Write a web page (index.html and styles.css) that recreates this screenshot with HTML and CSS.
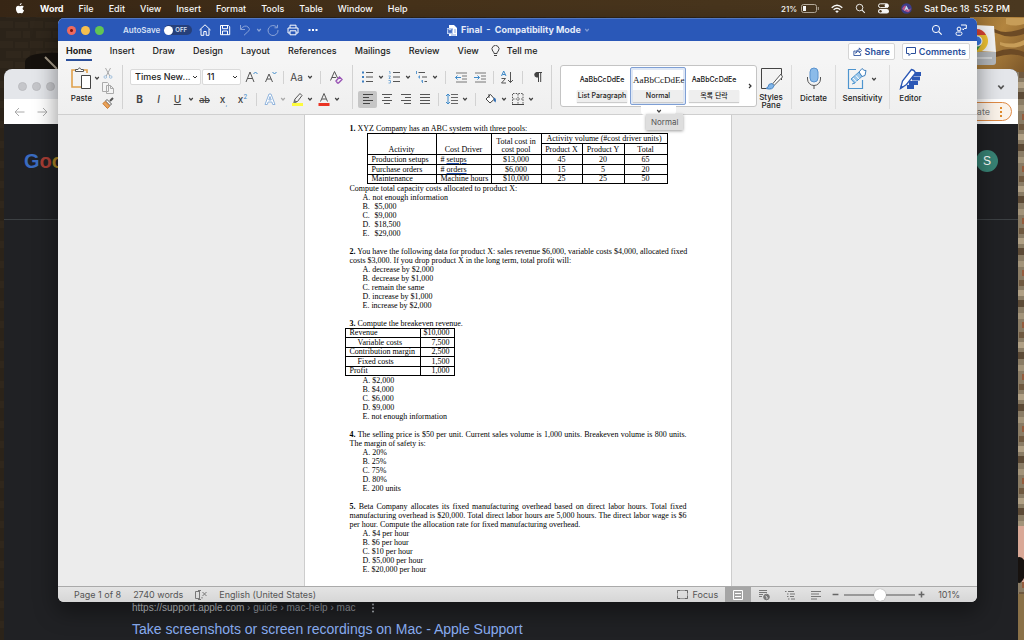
FILE: index.html
```html
<!DOCTYPE html>
<html lang="en">
<head>
<meta charset="utf-8">
<title>Final - Compatibility Mode</title>
<link rel="stylesheet" href="styles.css">
</head>
<body>
<svg class="defs" aria-hidden="true">
  <symbol id="chev" viewBox="0 0 8 8"><path d="M2.2 3 4 5l1.8-2" fill="none" stroke="currentColor" stroke-width="1.2"/></symbol>
  <symbol id="mag" viewBox="0 0 12 12"><circle cx="5" cy="5" r="3.6" fill="none" stroke="currentColor"/><path d="m7.7 7.7 3 3" stroke="currentColor" stroke-width="1.2"/></symbol>
</svg>
<div class="desktop">
  <svg class="wallpaper" viewBox="0 0 1024 640" preserveAspectRatio="none" aria-hidden="true">
    <defs>
      <pattern id="dark" width="30" height="20" patternUnits="userSpaceOnUse"><rect width="30" height="20" fill="#2b2319"/><path d="M0 1h13v7H0zM15 2h13v6H15zM6 11h15v7H6zM23 11h7v7h-7z" fill="#30271c"/></pattern>
      <pattern id="brick" width="26" height="52" patternUnits="userSpaceOnUse"><rect width="26" height="52" fill="#8a7c65"/><path d="M0 1h17v6H0z" fill="#a3947a"/><path d="M18 2h8v6h-8zM5 20h15v6H5z" fill="#6f5940"/><path d="M8 10h18v6H8z" fill="#955c3d"/><path d="M0 30h14v6H0zM15 29h11v7H15z" fill="#b0a085"/><path d="M3 40h19v7H3z" fill="#5c4a36"/></pattern>
      <linearGradient id="gold" x2="1" y2="1"><stop stop-color="#8d672f"/><stop offset=".5" stop-color="#b3853f"/><stop offset="1" stop-color="#7c572a"/></linearGradient>
    </defs>
    <rect width="1024" height="640" fill="url(#dark)"/>
    <path d="M25 62c0-6 12-10 33-9v20H25z" fill="#15110d"/><path d="m45 57 12 12" stroke="#a79c8a" stroke-width="2"/>
    <rect x="970" width="54" height="640" fill="url(#brick)"/>
    <rect x="970" width="54" height="72" fill="url(#gold)"/>
    <path d="M977 30q12-5 20 0t27-2v6q-14 5-25 0t-22 4zM996 52q14-6 28 0v5q-12-5-28 0z" fill="#6c4a25"/>
    <path d="M1006 18h18v6q-9 3-18 0zM1000 42q12 4 24-2v5q-12 5-24 0z" fill="#c79d58"/>
    <rect x="1014" y="526" width="10" height="56" fill="#d9a896"/><path d="M1014 560q6-6 10 0v18q-5 10-10 0z" fill="#17120f"/><rect x="1014" y="594" width="10" height="46" fill="#8a7148"/>
    <g>
      <path d="m974 25 20 1 2 26-19-1z" fill="#f4f5f6"/><path d="M974 52h22v10q0 3-3 3h-19z" fill="#b5b9bd"/><path d="M974 58h18" stroke="#f2f2f2"/>
      <circle cx="977" cy="41" r="11" fill="#f2c532"/><path d="M966 36a11 11 0 0 1 20-1h-9z" fill="#d94434"/><path d="m968 46 8 6 5-7z" fill="#3c9a4e"/><circle cx="977" cy="41" r="5.5" fill="#fff"/><circle cx="977" cy="41" r="4.4" fill="#3b7ded"/>
    </g>
  </svg>

  <header class="menubar">
    <nav class="menus" aria-label="Menu bar">
      <svg class="apple" viewBox="0 0 12 14"><path d="M8.1 0C8.200 1.500 7 2.900 5.700 2.900 5.500 1.500 6.800.200 8.100 0zM10.700 10.200C10 11.900 9.200 13.200 8.100 13.200 7.300 13.200 7.100 12.700 6.100 12.700 5.100 12.700 4.800 13.200 4.100 13.200 2.700 13.200.800 10 .800 7.300.800 4.900 2.200 3.500 3.800 3.500c.900 0 1.600.600 2.200.600.600 0 1.500-.700 2.600-.600 1 .100 1.700.500 2.200 1.200C8.600 6 8.900 9 11.200 9.300z" fill="currentColor"/></svg>
      <button class="menu app">Word</button><button class="menu">File</button><button class="menu">Edit</button><button class="menu">View</button><button class="menu">Insert</button><button class="menu">Format</button><button class="menu">Tools</button><button class="menu">Table</button><button class="menu">Window</button><button class="menu">Help</button>
    </nav>
    <div class="tray">
      <span class="battery">21%<svg width="18" height="9" viewBox="0 0 18 9"><rect x=".5" y=".5" width="15" height="8" rx="2" fill="none" stroke="#b9ae9d"/><rect x="2" y="2" width="3" height="5" fill="#fff"/><path d="M17.300 3v3" stroke="#b9ae9d"/></svg></span>
      <svg width="12" height="10" viewBox="0 0 12 10" fill="none" stroke="#fff" stroke-width="1.400"><path d="M.700 3.700Q6-1.200 11.300 3.700M2.600 5.700Q6 2.800 9.400 5.700"/><path d="M4.200 7.200Q6 5.800 7.800 7.200L6 9z" fill="#fff" stroke="none"/></svg>
      <svg width="11" height="11"><use href="#mag"/></svg>
      <svg width="11" height="11" viewBox="0 0 11 11"><rect x=".5" y=".8" width="10" height="3.800" rx="1.900" fill="none" stroke="#fff"/><circle cx="8.500" cy="2.700" r="1.900" fill="#fff"/><rect y="6" width="11" height="4.600" rx="2.300" fill="#fff"/><circle cx="2.500" cy="8.300" r="1.200" fill="#4a3720"/></svg>
      <svg width="11" height="11" viewBox="0 0 11 11"><circle cx="5.500" cy="5.500" r="5.300" fill="#3d3f8c"/><path d="M1 6q3-6 5-2t4 1q-1 5-4 4T1 6z" fill="#b9568f"/><path d="m3 8 2.500-5.500L8 8 5.500 6z" fill="#bfe9f5"/></svg>
      <time class="clock">Sat Dec 18&nbsp; 5:52 PM</time>
    </div>
  </header>

  <section class="browser" aria-label="Browser">
    <div class="tabstrip"><span class="dots"><i></i><i></i><i></i></span><svg width="12" height="12"><use href="#chev"/></svg></div>
    <div class="toolbar">
      <span class="nav"><svg width="11" height="10" viewBox="0 0 11 10"><path d="M10.500 5H1m4-4L1 5l4 4" fill="none" stroke="currentColor"/></svg><svg width="11" height="10" viewBox="0 0 11 10"><path d="M.500 5H10M6 1l4 4-4 4" fill="none" stroke="currentColor"/></svg></span>
      <button class="update">Update <svg width="4" height="12" viewBox="0 0 4 12" fill="#df8a2b"><path d="M1 1h2v2H1zM1 5h2v2H1zM1 9h2v2H1z"/></svg></button>
    </div>
    <div class="results">
      <div class="ghead"><span class="logo"><b class="g1">G</b><b class="g2">o</b><b class="g3">o</b></span><span class="avatar">S</span></div>
      <div class="hit">
        <div class="cite"><span><em>https://support.apple.com</em> › guide › mac-help › mac</span><svg width="4" height="10" viewBox="0 0 4 10" fill="#b5bac0"><circle cx="2" cy="1.500" r="1"/><circle cx="2" cy="5" r="1"/><circle cx="2" cy="8.500" r="1"/></svg></div>
        <a href="#result">Take screenshots or screen recordings on Mac - Apple Support</a>
      </div>
    </div>
  </section>

  <main class="word">
    <div class="titlebar">
      <div class="tools">
        <span class="lights"><i class="red"></i><i class="amber"></i><i class="green"></i></span>
        <label class="autosave">AutoSave<span class="switch"><input type="checkbox"><span class="knob"></span>OFF</span></label>
        <button class="tb" aria-label="Home"><svg viewBox="0 0 12 12"><path d="M.500 6 6 .800 11.500 6M2 5v6.300h2.800V7.500h2.400v3.800H10V5" fill="none" stroke="currentColor"/></svg></button>
        <button class="tb" aria-label="Save"><svg viewBox="0 0 12 12"><path d="M1.500 1.500h8l1.200 1.200v8H1.500zM3.500 1.500v3.200h5V1.500M3.500 10.700V7h5v3.700" fill="none" stroke="currentColor"/></svg></button>
        <button class="tb dim" aria-label="Undo"><svg viewBox="0 0 12 12"><path d="M1.500 1v4.500H6M1.800 5Q6 .300 9 3t-.500 5L5 11.300" fill="none" stroke="currentColor"/></svg></button>
        <svg class="tchev"><use href="#chev"/></svg>
        <button class="tb dim" aria-label="Redo"><svg viewBox="0 0 12 12"><path d="M10 3.500A5 5 0 1 0 11 6M10.500.800v3H7.500" fill="none" stroke="currentColor"/></svg></button>
        <button class="tb" aria-label="Print"><svg viewBox="0 0 12 12"><path d="M3 4V1.200h6V4M3 9H1V4h10v5H9M3 6.800h6v4H3z" fill="none" stroke="currentColor"/></svg></button>
        <button class="tb" aria-label="More"><svg viewBox="0 0 12 12"><path d="M1.500 5h2v2h-2zM5 5h2v2H5zM8.500 5h2v2h-2z" fill="currentColor"/></svg></button>
      </div>
      <h1 class="doctitle"><svg width="10" height="11" viewBox="0 0 10 11"><path d="M2 0h5l3 3v8H2z" fill="#fff"/><rect y="3" width="6" height="6" fill="#b9cdf0"/><path d="m1 4 1 4 1-3 1 3 1-4" fill="none" stroke="#2b57b5" stroke-width=".8"/><path d="M7 5h2M7 7h2M4 10h5" stroke="#8ba8de"/></svg>Final&nbsp; -&nbsp; Compatibility Mode<svg class="tchev"><use href="#chev"/></svg></h1>
      <div class="right"><button class="tb" aria-label="Search"><svg><use href="#mag"/></svg></button><button class="tb" aria-label="Collaborate"><svg viewBox="0 0 12 12" fill="none" stroke="currentColor"><circle cx="4" cy="5" r="1.900"/><path d="M1 9.500q0-1.500 1.500-1.500h3Q7 8 7 9.500T5.500 11.300h-3Q1 11.300 1 9.500zM6 1h5.300v3.500H9.500L8 6V4.500"/></svg></button></div>
    </div>

    <div class="tabrow">
      <nav class="tabs" aria-label="Ribbon tabs">
        <button class="tab on">Home</button><button class="tab">Insert</button><button class="tab">Draw</button><button class="tab">Design</button><button class="tab">Layout</button><button class="tab">References</button><button class="tab">Mailings</button><button class="tab">Review</button><button class="tab">View</button>
        <button class="tab tell"><svg width="9" height="12" viewBox="0 0 9 12" fill="none" stroke="#444"><path d="M3 8.500Q3 7 1.700 6A3.500 3.500 0 1 1 7.300 6Q6 7 6 8.500zM3 10.500h3"/></svg>Tell me</button>
      </nav>
      <div class="actions">
        <button class="pill"><svg width="9" height="9" viewBox="0 0 10 10" fill="none" stroke="currentColor"><path d="M3 4.500H1v5h7.500V7M3 7q0-4 4-4V1l2.500 3L7 6.500v-2Q4.500 4.500 3 7z"/></svg>Share</button>
        <button class="pill"><svg width="10" height="9" viewBox="0 0 10 9" fill="none" stroke="currentColor"><path d="M.500.500h9v6H5l-2 2v-2H.500z"/></svg>Comments</button>
      </div>
    </div>

    <div class="ribbon">
      <div class="group clip">
        <button class="big paste"><svg width="22" height="23" viewBox="0 0 22 23"><path d="M5 3H1v17h9M13 3h3v3" fill="none" stroke="#e0a04a" stroke-width="1.600"/><path d="M4.500 4.500V2.500H7L8.500.700 10 2.500h2.500v2z" fill="#fff" stroke="#555"/><path d="M10.500 8.500h9v13h-9z" fill="#fff" stroke="#444"/></svg><span>Paste</span></button>
        <svg class="chev clipchev"><use href="#chev"/></svg>
        <div class="stack">
          <button aria-label="Cut"><svg viewBox="0 0 12 12" fill="none" stroke="#aaa"><path d="m3.500 1 4.300 8M8.500 1 4.200 9"/><circle cx="3.300" cy="10" r="1.300" stroke="#a3c1dd"/><circle cx="8.700" cy="10" r="1.300" stroke="#a3c1dd"/></svg></button>
          <button aria-label="Copy"><svg viewBox="0 0 12 12" fill="#f4f4f4" stroke="#aaa"><path d="M.500.500h5l1 1v8h-6zM4.500 3.500h4l3 3v5h-7zM8.500 3.500v3h3"/></svg></button>
          <button aria-label="Format painter"><svg viewBox="0 0 12 12"><path d="m8 4 3-3" stroke="#555" stroke-width="2"/><path d="m5 2.500 4.500 4.500-1.500 1.500L3.500 4z" fill="#fff" stroke="#555"/><path d="M3.300 4.500.800 6.500 5.500 11.500l2.200-2.500z" fill="#e9a35b" stroke="#c97b33"/></svg></button>
        </div>
      </div>

      <div class="group rows">
        <div class="row">
          <select class="fname" aria-label="Font"><option>Times New...</option></select><select class="fsize" aria-label="Font size"><option>11</option></select>
          <button class="ib" aria-label="Grow font"><svg viewBox="0 0 14 14" fill="none"><path d="m2 12 4-10 4 10M3.500 8.500h5" stroke="#555"/><path d="M9.500 4 11.500 2l2 2" stroke="#3f8ac9"/></svg></button>
          <button class="ib" aria-label="Shrink font"><svg viewBox="0 0 14 14" fill="none"><path d="m2.500 12 3.500-8 3.500 8M4 9h4" stroke="#555"/><path d="m9.500 2 2 2 2-2" stroke="#3f8ac9"/></svg></button>
          <i class="sep"></i><button class="ib txt light">Aa</button><svg class="chev"><use href="#chev"/></svg><i class="sep wide"></i>
          <button class="ib" aria-label="Clear formatting"><svg viewBox="0 0 14 14" fill="none"><path d="m1.500 10.500 4-9 3 6.500M3 7.500h4" stroke="#555"/><path d="m7 11 3.500-4 2.500 2.500-3.500 3.500h-1z" stroke="#9a55b5" stroke-width="1.400"/></svg></button>
        </div>
        <div class="row">
          <button class="ib txt bold">B</button><button class="ib txt ital">I</button><button class="ib txt under">U</button><svg class="chev"><use href="#chev"/></svg>
          <button class="ib txt strike">ab</button><button class="ib txt">x<sub>,</sub></button><button class="ib txt">x<sup>2</sup></button><i class="sep"></i>
          <button class="ib" aria-label="Text effects"><svg viewBox="0 0 14 14"><path d="M2 12.500 6 2h2l4 10.500H9.700L8.900 10H5.100l-.800 2.500zM5.800 8h2.400L7 4.500z" fill="#fff" stroke="#8fb3dc"/></svg></button><svg class="chev pale"><use href="#chev"/></svg>
          <button class="ib" aria-label="Highlight"><svg viewBox="0 0 14 14"><path d="M2 11h11v3H2z" fill="#fdfb3d"/><path d="m5 7 5-5.500 2 2L7.500 9.500H4z" fill="#f1f1f1" stroke="#555"/><path d="m3 11 2-3 2 2-1 1z" fill="#777"/></svg></button><svg class="chev"><use href="#chev"/></svg>
          <button class="ib" aria-label="Font colour"><svg viewBox="0 0 14 14"><path d="M1.500 11h11v3h-11z" fill="#ea3323"/><path d="m3.500 9.500 3.500-8 3.500 8M5 7h4" fill="none" stroke="#555"/></svg></button><svg class="chev"><use href="#chev"/></svg>
        </div>
      </div>

      <div class="group rows">
        <div class="row">
          <button class="ib" aria-label="Bullets"><svg viewBox="0 0 14 14"><path d="M1 1.500h2v2H1zM1 6h2v2H1zM1 10.500h2v2H1z" fill="#3f7fc0"/><path d="M5 2.500h7M5 7h7M5 11.500h7" stroke="#555"/></svg></button><svg class="chev"><use href="#chev"/></svg>
          <button class="ib" aria-label="Numbering"><svg viewBox="0 0 14 14"><path d="M1 1.500h1v2.500M.500 6h2L1 8.500h1.500M.500 10.500h2v2.500H.500" fill="none" stroke="#79abd6"/><path d="M5 2.500h7M5 7h7M5 11.500h7" stroke="#555"/></svg></button><svg class="chev"><use href="#chev"/></svg>
          <button class="ib" aria-label="Multilevel list"><svg viewBox="0 0 14 14"><path d="M1.500 1v3M4.500 5.500v3M7.500 10v3M3 7h2M6 11h2" fill="none" stroke="#5c9ad0"/><path d="M3.500 2.500H10M7 7h5M9.500 11.500H12" stroke="#555"/></svg></button><svg class="chev"><use href="#chev"/></svg><i class="sep wide"></i>
          <button class="ib" aria-label="Decrease indent"><svg viewBox="0 0 14 14" fill="none"><path d="M2 3h11M8 6h5M8 9h5M2 12h11" stroke="#777"/><path d="M7 7.500H1.500m2-2-2 2 2 2" stroke="#3f8ac9"/></svg></button>
          <button class="ib" aria-label="Increase indent"><svg viewBox="0 0 14 14" fill="none"><path d="M2 3h11M8 6h5M8 9h5M2 12h11" stroke="#777"/><path d="M1 7.500h5.500m-2-2 2 2-2 2" stroke="#3f8ac9"/></svg></button><i class="sep"></i>
          <button class="ib" aria-label="Sort"><svg viewBox="0 0 14 14" fill="none"><path d="m1.500 6 2.200-5L6 6M2.500 4.500h2.700" stroke="#3f8ac9"/><path d="M1.500 8.500h4l-4 4.500H6M10.500 2v10.500M8 10l2.500 2.500L13 10" stroke="#555"/></svg></button><i class="sep wide"></i>
          <button class="ib" aria-label="Show marks"><svg viewBox="0 0 14 14"><path d="M7 2H5.500a2.800 2.800 0 0 0 0 5.500H7z" fill="#444"/><path d="M7.500 2v10M9.700 2v10M5.500 2.500H11" stroke="#444" fill="none"/></svg></button>
        </div>
        <div class="row">
          <button class="ib sel" aria-label="Align left"><svg viewBox="0 0 14 14"><path d="M2 2.500h10M2 5.500h6M2 8.500h10M2 11.500h7" stroke="#444"/></svg></button>
          <button class="ib" aria-label="Centre"><svg viewBox="0 0 14 14"><path d="M2 2.500h10M4 5.500h6M2 8.500h10M4 11.500h6" stroke="#555"/></svg></button>
          <button class="ib" aria-label="Align right"><svg viewBox="0 0 14 14"><path d="M2 2.500h10M6 5.500h6M2 8.500h10M5 11.500h7" stroke="#555"/></svg></button>
          <button class="ib" aria-label="Justify"><svg viewBox="0 0 14 14"><path d="M2 2.500h10M2 5.500h10M2 8.500h10M2 11.500h10" stroke="#555"/></svg></button><i class="sep"></i>
          <button class="ib" aria-label="Line spacing"><svg viewBox="0 0 14 14" fill="none"><path d="M6 2.500h7M6 5.500h7M6 8.500h7M6 11.500h7" stroke="#666"/><path d="M3 2v10M1 4l2-2 2 2M1 10l2 2 2-2" stroke="#3f8ac9"/></svg></button><svg class="chev"><use href="#chev"/></svg><i class="sep wide"></i>
          <button class="ib" aria-label="Shading"><svg viewBox="0 0 14 14"><path d="m6.500 2.500 4 4.500-4.500 4-4-4z" fill="#fff" stroke="#444"/><path d="M5 2v4" stroke="#444"/><path d="M9.500 5.500q3.500.500 2 5-2-1-2-5z" fill="#2d6cb5"/></svg></button><svg class="chev"><use href="#chev"/></svg>
          <button class="ib" aria-label="Borders"><svg viewBox="0 0 14 14" fill="none"><path d="M2 1.500h10.500M1.500 2v10M12 2v10M7 2v10M2 7h10" stroke="#555" stroke-dasharray="1.500 1.200"/><path d="M1 12.500h12" stroke="#444"/></svg></button><svg class="chev"><use href="#chev"/></svg>
        </div>
      </div>

      <div class="gallery">
        <button class="style"><span class="sample">AaBbCcDdEe</span><span class="sname">List Paragraph</span></button>
        <button class="style picked"><span class="sample serif">AaBbCcDdEe</span><span class="sname">Normal</span></button>
        <button class="style"><span class="sample">AaBbCcDdEe</span><span class="sname">목록 단락</span></button>
        <button class="next" aria-label="More styles"><svg width="6" height="8" viewBox="0 0 6 8"><path d="m2 2 2 2-2 2" fill="none" stroke="#333" stroke-width="1.200"/></svg></button>
        <button class="expand" aria-label="Expand gallery"><svg class="chev"><use href="#chev"/></svg></button>
        <span class="tip" role="tooltip">Normal</span>
      </div>

      <button class="big pane"><svg width="23" height="23" viewBox="0 0 23 23"><path d="M11 21.500H1.500v-20h20V13" fill="none" stroke="#444"/><path d="M21 7 12.500 17l1.500 1.500L22.500 10z" fill="#fff" stroke="#555"/><path d="M12 16.500q-4 0-4 3.500l-2 1.500q7 2 8-3z" fill="#82b6e8" stroke="#4a86c5"/></svg><span>Styles<br>Pane</span></button>
      <button class="big dictate"><svg width="16" height="23" viewBox="0 0 16 23"><rect x="4" y="1" width="8" height="14" rx="4" fill="#8bbbe9" stroke="#5a93cf"/><path d="M1.500 10v2a6.500 6.500 0 0 0 13 0v-2M8 18.500V22" fill="none" stroke="#555"/></svg><span>Dictate</span></button>
      <button class="big sens"><span class="icons"><svg width="20" height="23" viewBox="0 0 20 23"><path d="M9 2.500H1.500v19h14V13" fill="none" stroke="#4e95cf" stroke-width="1.200"/><path d="m4 12 8-7 3.500 4-8 7zM5 17l3-1" fill="#9cc7ea" stroke="#4e95cf"/><path d="m6 11 3.500 4M9 8.500l3.500 4" stroke="#fff"/><path d="m12 5 3-3.500q2 2.500 4 2l-1 5-3 1z" fill="#fff" stroke="#3e7fbd"/></svg><svg class="chev"><use href="#chev"/></svg></span><span>Sensitivity</span></button>
      <button class="big editor"><svg width="23" height="23" viewBox="0 0 23 23"><path d="M14 7h8M13 11.500h8M10 16h9M8 20h7" stroke="#2b57b5" stroke-width="4"/><path d="M12.500 2.500 3.500 14 1.500 21.500 7.500 17.500 16.500 6q-1-3-4-3.500z" fill="#fff" stroke="#2b57b5" stroke-width="1.300"/><path d="m2 18 2.500 2-3.500 2z" fill="#2b57b5"/></svg><span>Editor</span></button>
    </div>

    <div class="canvas">
      <article class="page">
        <p><b>1.</b> XYZ Company has an ABC system with three pools:</p>
        <table class="costs">
          <colgroup><col class="c1"><col class="c2"><col class="c3"><col class="c4"><col class="c5"><col class="c6"></colgroup>
          <tr><th rowspan="2">Activity</th><th rowspan="2">Cost Driver</th><th rowspan="2">Total cost in<br>cost pool</th><th colspan="3">Activity volume (#cost driver units)</th></tr>
          <tr class="tall"><th>Product X</th><th>Product Y</th><th>Total</th></tr>
          <tr><td>Production setups</td><td># <u>setups</u></td><td>$13,000</td><td>45</td><td>20</td><td>65</td></tr>
          <tr><td>Purchase orders</td><td># <u>orders</u></td><td>$6,000</td><td>15</td><td>5</td><td>20</td></tr>
          <tr class="short"><td>Maintenance</td><td>Machine hours</td><td>$10,000</td><td>25</td><td>25</td><td>50</td></tr>
        </table>
        <p>Compute total capacity costs allocated to product X:</p>
        <ul class="lettered"><li><span>A.</span>not enough information</li><li><span>B.</span>$5,000</li><li><span>C.</span>$9,000</li><li><span>D.</span>$18,500</li><li><span>E.</span>$29,000</li></ul>
        <p><span class="line"><b>2.</b> You have the following data for product X: sales revenue $6,000, variable costs $4,000, allocated fixed</span> <span class="line">costs $3,000. If you drop product X in the long term, total profit will:</span></p>
        <ul><li>A. decrease by $2,000</li><li>B. decrease by $1,000</li><li>C. remain the same</li><li>D. increase by $1,000</li><li>E. increase by $2,000</li></ul>
        <p><b>3.</b> Compute the breakeven revenue.</p>
        <table class="income">
          <tr class="short"><td>Revenue</td><td>$10,000</td></tr><tr><td class="in">Variable costs</td><td>7,500</td></tr><tr class="short"><td>Contribution margin</td><td>2,500</td></tr><tr><td class="in">Fixed costs</td><td>1,500</td></tr><tr class="short"><td>Profit</td><td>1,000</td></tr>
        </table>
        <ul><li>A. $2,000</li><li>B. $4,000</li><li>C. $6,000</li><li>D. $9,000</li><li>E. not enough information</li></ul>
        <p><b>4.</b> The selling price is $50 per unit. Current sales volume is 1,000 units. Breakeven volume is 800 units. The margin of safety is:</p>
        <ul><li>A. 20%</li><li>B. 25%</li><li>C. 75%</li><li>D. 80%</li><li>E. 200 units</li></ul>
        <p><b>5.</b> Beta Company allocates its fixed manufacturing overhead based on direct labor hours. Total fixed manufacturing overhead is $20,000. Total direct labor hours are 5,000 hours. The direct labor wage is $6 per hour. Compute the allocation rate for fixed manufacturing overhead.</p>
        <ul><li>A. $4 per hour</li><li>B. $6 per hour</li><li>C. $10 per hour</li><li>D. $5,000 per hour</li><li>E. $20,000 per hour</li></ul>
      </article>
    </div>

    <footer class="status">
      <div class="info"><span>Page 1 of 8</span><span>2740 words</span><svg width="12" height="10" viewBox="0 0 12 10" fill="none" stroke="#777"><path d="M4.500 1.500H.500v7h4M4.500 1v8.500M3 9.500h3M3 .500h3M7.500 2l4 4M11.500 2l-4 4M7 8.500V7"/></svg><span>English (United States)</span></div>
      <div class="views">
        <button class="focus"><svg width="11" height="9" viewBox="0 0 11 9" fill="none" stroke="#666"><path d="M.500.500h10v8H.500z" stroke="#999"/><path d="M.500 3V.500H3M8 .500h2.500V3M.500 6v2.500H3M8 8.500h2.500V6"/></svg>Focus</button>
        <button class="view now" aria-label="Print layout"><svg viewBox="0 0 12 12" fill="none" stroke="#fff"><path d="M1.500 1.500h9v9h-9zM3 4.500h6M3 7.500h6"/></svg></button>
        <button class="view" aria-label="Web layout"><svg viewBox="0 0 12 12" fill="none" stroke="#777"><path d="M1 1.500h8M1 3.500h8M1 5.500h4M1 7.500h3"/><circle cx="8.500" cy="8" r="2.800" fill="#777"/><path d="m7.500 7 1.500 1v2" stroke="#ddd"/></svg></button>
        <button class="view" aria-label="Outline"><svg viewBox="0 0 12 12" fill="none" stroke="#777"><path d="M1 2.500h1.500M4 2.500h6M3 5h1.500M6 5h5M3 7.500h1.500M6 7.500h4M4 10h1.500M7 10h4"/></svg></button>
        <button class="view" aria-label="Draft"><svg viewBox="0 0 12 12" fill="none" stroke="#777"><path d="M1 2.500h10M1 5h8M1 7.500h10M1 10h6"/></svg></button>
        <button class="zoom" aria-label="Zoom out"><svg viewBox="0 0 6 6"><path d="M.500 3h5" stroke="#666" stroke-width="1.300"/></svg></button><input type="range" min="0" max="100" value="50" aria-label="Zoom"><button class="zoom" aria-label="Zoom in"><svg viewBox="0 0 6 6"><path d="M.500 3h5M3 .500v5" stroke="#666" stroke-width="1.300"/></svg></button>
        <span class="pct">101%</span>
      </div>
    </footer>
  </main>
</div>
</body>
</html>
```

FILE: styles.css
```css
* { box-sizing: border-box; }
body { margin: 0; font: 9px/12px Inter, "Noto Sans CJK KR", sans-serif; color: #222; }
button { border: 0; padding: 0; background: none; font: inherit; color: inherit; white-space: nowrap; }
p, ul, h1 { margin: 0; padding: 0; }
svg { flex: none; display: block; }
.defs { position: absolute; width: 0; height: 0; }
.desktop { position: relative; height: 100vh; overflow: hidden; background: #2b2319; }
.wallpaper { position: absolute; inset: 0; width: 100%; height: 100%; }

.menubar { position: relative; display: flex; justify-content: space-between; align-items: center; height: 17px; padding: 0 14px 0 15px; background: linear-gradient(90deg, #372615, #46321a 40%, #4a3820); color: #fff; font-weight: 500; }
.menus { display: flex; align-items: center; gap: 15px; }
.apple { width: 10px; height: 11px; }
.app { font-weight: 700; }
.tray { display: flex; align-items: center; gap: 12px; }
.battery { display: flex; align-items: center; gap: 4px; font-size: 8px; }

.browser { position: absolute; inset: 69px 6px 0 4px; display: flex; flex-direction: column; border-radius: 8px 8px 0 0; overflow: hidden; background: #202124; }
.tabstrip { flex: none; height: 30px; padding: 5px 11px 0 14px; display: flex; align-items: center; justify-content: space-between; background: #e4e6ea; color: #555; }
.dots { display: flex; gap: 5px; }
.dots i { width: 9px; height: 9px; border-radius: 50%; background: #c5c6ca; border: 1px solid #bcbdc1; }
.toolbar { flex: none; height: 25px; padding: 0 6px 0 10px; display: flex; align-items: center; justify-content: space-between; background: #fff; }
.nav { display: flex; gap: 12px; color: #aaa; }
.update { display: flex; align-items: center; gap: 9px; height: 19px; padding: 0 8px; border: 1px solid #df8a45; border-radius: 10px; background: #fbf3ea; color: #777; }
.results { flex: 1; display: flex; flex-direction: column; justify-content: space-between; font-family: "Liberation Sans", sans-serif; }
.ghead { display: flex; align-items: center; justify-content: space-between; height: 96px; padding: 0 20px 22px 20px; border-bottom: 1px solid #3c4043; }
.logo { font-size: 20px; line-height: 24px; }
.g1 { color: #3a6bc0; } .g2 { color: #a63d34; } .g3 { color: #a98222; }
.avatar { width: 22px; height: 22px; border-radius: 50%; background: #388375; color: #fff; font-size: 12px; line-height: 22px; text-align: center; }
.hit { padding: 0 128px 2px; color: #9a9ea4; }
.cite { display: flex; align-items: center; gap: 16px; font-size: 10px; line-height: 14px; }
.cite em { font-style: normal; color: #c4c7cb; }
.hit a { display: block; margin-top: 5px; color: #8aaef2; font-size: 14px; line-height: 18px; text-decoration: none; }

.word { position: absolute; inset: 18px 47px 38px 58px; display: flex; flex-direction: column; border-radius: 6px; overflow: hidden; background: #ececec; box-shadow: 0 8px 22px 2px rgba(0, 0, 0, .4); }
.titlebar { flex: none; display: grid; grid-template-columns: 1fr auto 1fr; align-items: center; height: 23px; padding: 0 6px 0 9px; background: #2a58b8; border-top: 1px solid #5378c4; color: #fff; }
.tools, .lights, .autosave, .right, .doctitle { display: flex; align-items: center; }
.lights { gap: 5px; }
.lights i { width: 9px; height: 9px; border-radius: 50%; }
.red { background: radial-gradient(circle, #7c1512 1px, #ee6a5e 2px); } .amber { background: #f5be4f; } .green { background: #61c554; }
.autosave { gap: 4px; margin: 0 3px 0 19px; font-size: 8px; font-weight: 600; color: #d6e0f4; }
.switch { display: flex; align-items: center; gap: 2px; width: 28px; height: 10px; border-radius: 5px; background: #263f79; font-size: 6px; }
.switch input { position: absolute; opacity: 0; width: 28px; height: 10px; margin: 0; }
.knob { width: 9px; height: 9px; border-radius: 50%; background: #fff; }
.tb { width: 20px; height: 14px; display: grid; place-items: center; }
.tb svg { width: 12px; height: 12px; }
.dim { opacity: .45; }
.tchev { width: 8px; height: 8px; opacity: .45; }
.doctitle { gap: 4px; font-size: 9px; font-weight: 700; color: #e4ebf8; }
.doctitle .tchev { margin-left: -2px; }
.right { justify-content: flex-end; gap: 4px; }

.tabrow { flex: none; display: flex; justify-content: space-between; height: 21px; padding: 0 7px 0 8px; background: #f5f5f5; }
.tabs { display: flex; gap: 18px; font-weight: 500; }
.tab { display: flex; align-items: center; height: 20px; border-bottom: 2px solid transparent; border-top: 2px solid transparent; }
.on { font-weight: 700; border-bottom-color: #2a4f9b; }
.tell { gap: 7px; margin-left: -6px; }
.actions { display: flex; gap: 7px; padding-top: 2px; }
.pill { display: flex; align-items: center; gap: 3px; height: 17px; padding: 0 4px; border: 1px solid #d5d5d5; border-radius: 2px; background: #fff; color: #2a4f9b; font-weight: 600; }
.pill + .pill { padding: 0 3px; }

.ribbon { position: relative; z-index: 1; flex: none; display: flex; align-items: flex-start; height: 53px; padding-top: 3px; background: linear-gradient(#f5f5f5, #efefef); border-bottom: 1px solid #cfcfcf; font-size: 8px; line-height: 8px; font-weight: 500; }
.group { flex: none; height: 44px; border-right: 1px solid #d2d2d2; }
.clip { display: flex; width: 65px; padding-left: 12px; }
.big { flex: none; display: flex; flex-direction: column; align-items: center; gap: 4px; height: 44px; padding-top: 2px; }
.clipchev { margin-top: 9px; }
.stack { display: grid; grid-template-rows: repeat(3, 12px); gap: 3px; padding-left: 1px; margin-top: 2px; }
.stack svg { width: 12px; height: 12px; }
.paste { width: 23px; }
.rows { display: grid; grid-template-rows: 18px 18px; row-gap: 4px; padding: 3px 7px 0 7px; }
.rows + .rows { padding: 3px 4px 0 5px; }
.row { display: flex; align-items: center; }
.ib { flex: none; width: 19px; height: 17px; display: grid; place-items: center; border-radius: 2px; }
.ib svg { width: 14px; height: 14px; }
.sel { background: #c6c6c6; }
.chev { width: 8px; height: 8px; color: #444; }
.pale { color: #aaa; }
.txt { display: block; text-align: center; line-height: 17px; font-size: 10px; color: #444; }
.light { font-weight: 400; }
.bold { font-weight: 700; } .ital { font-style: italic; } .under { text-decoration: underline; } .strike { text-decoration: line-through; font-size: 9px; }
.txt sub, .txt sup { color: #3f8ac9; font-size: 6px; line-height: 0; }
.sep { width: 8px; height: 13px; background: linear-gradient(#d2d2d2, #d2d2d2) center / 1px 100% no-repeat; }
.wide { width: 12px; }
select { appearance: none; height: 16px; border: 1px solid #dadada; border-radius: 2px; padding: 0 4px; font: 500 9px/14px Inter, sans-serif; color: #222; background: #fff url("data:image/svg+xml,%3Csvg xmlns='http://www.w3.org/2000/svg' width='8' height='8'%3E%3Cpath d='m2 3 2 2 2-2' fill='none' stroke='%23333'/%3E%3C/svg%3E") right 1px center no-repeat; }
.fname { width: 71px; margin-right: 1px; }
.fsize { width: 39px; }

.gallery { position: relative; flex: none; display: flex; align-items: center; width: 197px; height: 42px; margin-left: 8px; padding-left: 13px; border: 1px solid #c4c4c4; border-radius: 3px; background: #fff; }
.style { display: flex; flex-direction: column; width: 56px; height: 38px; padding: 2px; border: 1px solid transparent; }
.style .sample { flex: 1; display: grid; place-items: center; background: #fff; font-size: 7px; color: #111; }
.style .serif { font: 9px/10px "Liberation Serif", serif; }
.sname { height: 12px; line-height: 12px; font-size: 7px; background: #eee; text-align: center; box-shadow: 0 1px 1px #ccc; }
.picked { border: 1px solid #7f9fd4; border-radius: 2px; background: #dfe8f6; }
.next { margin-left: 5px; }
.expand { position: absolute; top: 40px; left: 80px; width: 35px; height: 9px; display: grid; place-items: center; background: #fff; border-radius: 0 0 4px 4px; }
.tip { position: absolute; top: 48px; left: 85px; padding: 2px 5px; background: #dedede; box-shadow: 0 1px 3px rgba(0, 0, 0, .4); font-size: 8px; line-height: 12px; color: #555; font-weight: 400; }
.pane { width: 28px; gap: 3px; margin-right: 6px; }
.dictate, .sens, .editor { border-left: 1px solid #dcdcdc; }
.dictate { width: 44px; } .sens { width: 54px; } .editor { width: 42px; }
.icons { display: flex; align-items: center; gap: 3px; }

.canvas { flex: 1; min-height: 0; overflow: hidden; }
.page { width: 428px; min-height: 100%; margin: 0 auto; padding: 9px 44px 0 45px; background: #fff; border: solid #cdcdcd; border-width: 0 1px; font: 8px/9px "Liberation Serif", serif; color: #000; }
.page p { text-align: justify; }
.line { display: block; white-space: nowrap; }
.page ul { list-style: none; padding-left: 13px; margin-bottom: 9px; }
.page .lettered { margin: 0 0 9px; }
.lettered span { display: inline-block; width: 12px; }
.lettered li:first-child span { width: 10px; }
table { border-collapse: collapse; }
th, td { padding: 0; border: 1px solid #000; font-weight: 400; line-height: 8px; white-space: nowrap; height: 10px; }
.short td { height: 9px; }
.tall th { height: 11px; }
.costs { table-layout: fixed; width: 301px; margin-left: 17px; text-align: center; }
.costs th { vertical-align: bottom; }
.c1 { width: 69px; } .c2 { width: 55px; } .c3 { width: 50px; } .c4 { width: 41px; } .c5 { width: 42px; }
.costs td:nth-child(-n+2) { text-align: left; padding-left: 4px; }
.costs u { text-decoration-color: #2a58b8; }
.income { width: 110px; margin-left: -5px; }
.income td { padding-left: 4px; }
.income td + td { width: 34px; padding: 0 4px 0 0; text-align: right; }
.income .in { padding-left: 12px; }

.status { flex: none; display: flex; justify-content: space-between; height: 16px; padding: 0 17px 0 16px; background: linear-gradient(#e4e4e4, #d6d6d6); border-top: 1px solid #aaa; color: #555; }
.info, .views, .focus { display: flex; align-items: center; }
.info { gap: 12px; }
.focus { gap: 5px; margin-right: 7px; }
.view { width: 26px; height: 15px; display: grid; place-items: center; }
.view svg { width: 12px; height: 12px; }
.now { background: #a5a5a5; }
.zoom { width: 8px; margin: 0 4px 0 3px; }
.zoom svg { width: 7px; height: 7px; }
.pct { margin-left: 8px; }
input[type=range] { appearance: none; width: 71px; height: 12px; margin: 0; background: linear-gradient(#999, #999) center / 100% 2px no-repeat; }
input[type=range]::-webkit-slider-thumb { appearance: none; width: 12px; height: 12px; border-radius: 50%; background: #fff; box-shadow: 0 0 1px #777; }
```
